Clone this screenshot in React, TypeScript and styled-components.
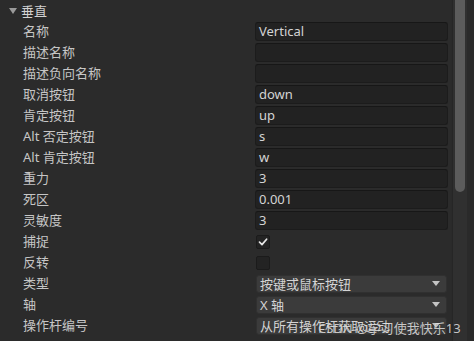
import React from "react";
import styled, { createGlobalStyle } from "styled-components";

const Global = createGlobalStyle`
  html, body { margin: 0; padding: 0; background: #2b2b2b; }
  body { font-family: "Noto Sans", "Noto Sans CJK SC", sans-serif; }
`;

const Frame = styled.div`
  position: relative;
  width: 474px;
  height: 341px;
  overflow: hidden;
  background: #2b2b2b;
  display: flex;
`;

const Content = styled.div`
  width: 451px;
  display: flex;
  flex-direction: column;
`;

const Header = styled.div`
  height: 21px;
  display: flex;
  align-items: center;
  padding-left: 9px;
  gap: 4px;
  color: #d2d2d2;
  font-size: 13px;
  font-family: "Noto Sans CJK SC", sans-serif;
`;

const Caret = styled.span`
  width: 0;
  height: 0;
  border-left: 4px solid transparent;
  border-right: 4px solid transparent;
  border-top: 6px solid #9a9a9a;
  margin-top: 1px;
`;

const Row = styled.div`
  height: 21px;
  display: grid;
  grid-template-columns: 255px 193px;
  align-items: center;
`;

const Label = styled.div`
  padding-left: 23px;
  color: #c6c6c6;
  font-size: 13px;
  font-family: "Noto Sans", "Noto Sans CJK SC", sans-serif;
  white-space: nowrap;
  line-height: 21px;
`;

const Field = styled.div`
  height: 19px;
  box-sizing: border-box;
  background: #222222;
  border: 1px solid #1c1c1c;
  border-top-color: #171717;
  border-radius: 3px;
  color: #d4d4d4;
  font-size: 13px;
  line-height: 17px;
  padding-left: 3px;
  font-family: "Noto Sans", "Noto Sans CJK SC", sans-serif;
  white-space: nowrap;
  overflow: hidden;
`;

const CheckBox = styled.div<{ $on?: boolean }>`
  width: 14px;
  height: 14px;
  box-sizing: border-box;
  margin-left: 1px;
  background: #232323;
  border: 1px solid #1b1b1b;
  border-radius: 2px;
  display: flex;
  align-items: center;
  justify-content: center;
`;

const Dropdown = styled.div`
  height: 18px;
  box-sizing: border-box;
  margin-left: 1px;
  width: 191px;
  background: #3b3b3b;
  border: 1px solid #303030;
  border-radius: 3px;
  color: #d4d4d4;
  font-size: 13px;
  line-height: 16px;
  padding-left: 3px;
  display: flex;
  align-items: center;
  justify-content: space-between;
  font-family: "Noto Sans", "Noto Sans CJK SC", sans-serif;
  white-space: nowrap;
  overflow: hidden;
`;

const Arrow = styled.span`
  width: 0;
  height: 0;
  border-left: 4px solid transparent;
  border-right: 4px solid transparent;
  border-top: 5px solid #c4c4c4;
  margin-right: 6px;
  flex: none;
`;

const ScrollTrack = styled.div`
  width: 23px;
  display: flex;
  background: #2a2a2a;
`;

const TrackInner = styled.div`
  width: 14px;
  margin-left: 1px;
  background: #303030;
  border-left: 1px solid #262626;
  display: flex;
  justify-content: center;
`;

const Thumb = styled.div`
  width: 10px;
  height: 196px;
  margin-top: -4px;
  background: #5c5c5c;
  border-radius: 0 0 5px 5px;
`;

const Watermark = styled.div`
  position: absolute;
  left: 318px;
  top: 318px;
  color: rgba(235, 235, 235, 0.82);
  font-size: 13px;
  font-family: "Noto Sans", "Noto Sans CJK SC", sans-serif;
  white-space: nowrap;
  text-shadow: 0 0 1px rgba(0, 0, 0, 0.3);
`;

type Item =
  | { label: string; kind: "text"; value: string }
  | { label: string; kind: "check"; on: boolean }
  | { label: string; kind: "drop"; value: string };

const items: Item[] = [
  { label: "名称", kind: "text", value: "Vertical" },
  { label: "描述名称", kind: "text", value: "" },
  { label: "描述负向名称", kind: "text", value: "" },
  { label: "取消按钮", kind: "text", value: "down" },
  { label: "肯定按钮", kind: "text", value: "up" },
  { label: "Alt 否定按钮", kind: "text", value: "s" },
  { label: "Alt 肯定按钮", kind: "text", value: "w" },
  { label: "重力", kind: "text", value: "3" },
  { label: "死区", kind: "text", value: "0.001" },
  { label: "灵敏度", kind: "text", value: "3" },
  { label: "捕捉", kind: "check", on: true },
  { label: "反转", kind: "check", on: false },
  { label: "类型", kind: "drop", value: "按键或鼠标按钮" },
  { label: "轴", kind: "drop", value: "X 轴" },
  { label: "操作杆编号", kind: "drop", value: "从所有操作杆获取运动" },
];

const Check = () => (
  <svg width="10" height="10" viewBox="0 0 10 10">
    <path d="M1.5 5.2 L4 7.6 L8.6 2.2" fill="none" stroke="#e6e6e6" strokeWidth="1.7" strokeLinecap="round" strokeLinejoin="round" />
  </svg>
);

export default function App() {
  return (
    <>
      <Global />
      <Frame>
        <Content>
          <Header>
            <Caret />
            <span>垂直</span>
          </Header>
          {items.map((it) => (
            <Row key={it.label}>
              <Label>{it.label}</Label>
              {it.kind === "text" && <Field>{it.value}</Field>}
              {it.kind === "check" && <CheckBox $on={it.on}>{it.on && <Check />}</CheckBox>}
              {it.kind === "drop" && (
                <Dropdown>
                  <span>{it.value}</span>
                  <Arrow />
                </Dropdown>
              )}
            </Row>
          ))}
        </Content>
        <ScrollTrack>
          <TrackInner>
            <Thumb />
          </TrackInner>
        </ScrollTrack>
        <Watermark>CSDN @学习使我快乐13</Watermark>
      </Frame>
    </>
  );
}
